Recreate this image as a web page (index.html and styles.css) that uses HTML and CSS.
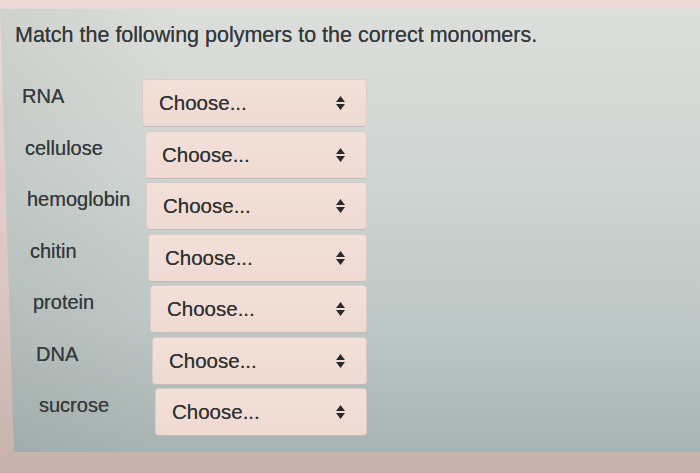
FILE: index.html
```html
<!DOCTYPE html>
<html>
<head>
<meta charset="utf-8">
<link rel="stylesheet" href="styles.css">
</head>
<body>
<div class="panel">
  <h1 class="title">Match the following polymers to the correct monomers.</h1>
  <div class="rows">
    <div class="row"><span class="label">RNA</span><div class="select"><span>Choose...</span><svg class="arrows" viewBox="0 0 9 14" width="9" height="14"><path d="M4.5 0 L9 6 L0 6 Z M0 8 L9 8 L4.5 14 Z"/></svg></div></div>
    <div class="row"><span class="label">cellulose</span><div class="select"><span>Choose...</span><svg class="arrows" viewBox="0 0 9 14" width="9" height="14"><path d="M4.5 0 L9 6 L0 6 Z M0 8 L9 8 L4.5 14 Z"/></svg></div></div>
    <div class="row"><span class="label">hemoglobin</span><div class="select"><span>Choose...</span><svg class="arrows" viewBox="0 0 9 14" width="9" height="14"><path d="M4.5 0 L9 6 L0 6 Z M0 8 L9 8 L4.5 14 Z"/></svg></div></div>
    <div class="row"><span class="label">chitin</span><div class="select"><span>Choose...</span><svg class="arrows" viewBox="0 0 9 14" width="9" height="14"><path d="M4.5 0 L9 6 L0 6 Z M0 8 L9 8 L4.5 14 Z"/></svg></div></div>
    <div class="row"><span class="label">protein</span><div class="select"><span>Choose...</span><svg class="arrows" viewBox="0 0 9 14" width="9" height="14"><path d="M4.5 0 L9 6 L0 6 Z M0 8 L9 8 L4.5 14 Z"/></svg></div></div>
    <div class="row"><span class="label">DNA</span><div class="select"><span>Choose...</span><svg class="arrows" viewBox="0 0 9 14" width="9" height="14"><path d="M4.5 0 L9 6 L0 6 Z M0 8 L9 8 L4.5 14 Z"/></svg></div></div>
    <div class="row"><span class="label">sucrose</span><div class="select"><span>Choose...</span><svg class="arrows" viewBox="0 0 9 14" width="9" height="14"><path d="M4.5 0 L9 6 L0 6 Z M0 8 L9 8 L4.5 14 Z"/></svg></div></div>
  </div>
</div>
</body>
</html>
```

FILE: styles.css
```css
html, body {
  margin: 0;
  padding: 0;
}
body {
  width: 700px;
  height: 473px;
  overflow: hidden;
  background: linear-gradient(180deg, #ecd9d3 0%, #dcc6c1 60%, #c7b1ad 100%);
  font-family: "Liberation Sans", Arial, Helvetica, sans-serif;
  color: #353839;
}
.panel {
  margin-top: 9px;
  height: 443px;
  box-sizing: border-box;
  padding-top: 13px;
  background:
    linear-gradient(90deg, rgba(90, 95, 92, 0.10) 0%, rgba(90, 95, 92, 0) 25%),
    linear-gradient(180deg, #dcdedb 0%, #d0d6d3 35%, #bec8c6 70%, #a8b4b3 100%);
  clip-path: polygon(0 0, 100% 0, 100% 100%, 14px 100%);
}
.title {
  margin: 0;
  padding-left: 15px;
  font-size: 21.5px;
  font-weight: normal;
  line-height: 26px;
  color: #34393b;
  text-shadow: 0 0 0.5px rgba(40, 44, 46, 0.8);
}
.rows {
  margin-top: 31px;
  display: flex;
  flex-direction: column;
  gap: 3.5px;
}
.row {
  display: flex;
  align-items: flex-start;
  width: 367px;
  box-sizing: border-box;
}
.label {
  flex: none;
  font-size: 20px;
  line-height: 22px;
  padding-top: 6px;
  color: #363b3d;
  text-shadow: 0 0 0.5px rgba(40, 44, 46, 0.8);
}
.select {
  flex: 1;
  height: 48px;
  box-sizing: border-box;
  display: flex;
  align-items: center;
  justify-content: space-between;
  padding: 0 21px 0 16px;
  background: linear-gradient(180deg, #f3e0d9 0%, #efdad3 100%);
  border: 1px solid #d9ccc7;
  border-bottom-color: #c6bab6;
  border-radius: 4px;
  font-size: 20.5px;
  color: #313233;
  text-shadow: 0 0 0.5px rgba(40, 40, 42, 0.8);
}
.arrows {
  fill: #2a2a2c;
}
.row:nth-child(1) { padding-left: 22px; }
.row:nth-child(1) .label { width: 120px; }
.row:nth-child(2) { padding-left: 25px; }
.row:nth-child(2) .label { width: 120px; }
.row:nth-child(3) { padding-left: 27px; }
.row:nth-child(3) .label { width: 119px; }
.row:nth-child(4) { padding-left: 30px; }
.row:nth-child(4) .label { width: 118px; }
.row:nth-child(5) { padding-left: 33px; }
.row:nth-child(5) .label { width: 117px; }
.row:nth-child(6) { padding-left: 36px; }
.row:nth-child(6) .label { width: 116px; }
.row:nth-child(7) { padding-left: 39px; }
.row:nth-child(7) .label { width: 116px; }
```
